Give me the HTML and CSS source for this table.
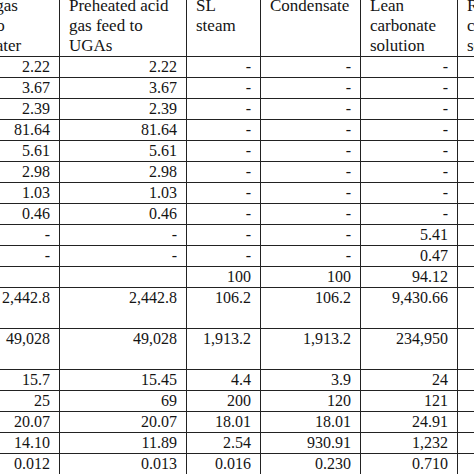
FILE: index.html
```html
<!DOCTYPE html>
<html>
<head>
<meta charset="utf-8">
<link rel="stylesheet" href="styles.css">
</head>
<body>
<table class="stream-table">
  <thead>
    <tr>
      <th class="c1">Acid gas<br>feed to<br>preheater</th>
      <th class="c2">Preheated acid<br>gas feed to<br>UGAs</th>
      <th class="c3">SL<br>steam</th>
      <th class="c4">Condensate</th>
      <th class="c5">Lean<br>carbonate<br>solution</th>
      <th class="c6">Rich<br>carbonate<br>solution</th>
    </tr>
  </thead>
  <tbody>
    <tr><td>2.22</td><td>2.22</td><td>-</td><td>-</td><td>-</td><td></td></tr>
    <tr><td>3.67</td><td>3.67</td><td>-</td><td>-</td><td>-</td><td></td></tr>
    <tr><td>2.39</td><td>2.39</td><td>-</td><td>-</td><td>-</td><td></td></tr>
    <tr><td>81.64</td><td>81.64</td><td>-</td><td>-</td><td>-</td><td></td></tr>
    <tr><td>5.61</td><td>5.61</td><td>-</td><td>-</td><td>-</td><td></td></tr>
    <tr><td>2.98</td><td>2.98</td><td>-</td><td>-</td><td>-</td><td></td></tr>
    <tr><td>1.03</td><td>1.03</td><td>-</td><td>-</td><td>-</td><td></td></tr>
    <tr><td>0.46</td><td>0.46</td><td>-</td><td>-</td><td>-</td><td></td></tr>
    <tr><td>-</td><td>-</td><td>-</td><td>-</td><td>5.41</td><td></td></tr>
    <tr><td>-</td><td>-</td><td>-</td><td>-</td><td>0.47</td><td></td></tr>
    <tr><td></td><td></td><td>100</td><td>100</td><td>94.12</td><td></td></tr>
    <tr class="tall"><td>2,442.8</td><td>2,442.8</td><td>106.2</td><td>106.2</td><td>9,430.66</td><td></td></tr>
    <tr class="tall"><td>49,028</td><td>49,028</td><td>1,913.2</td><td>1,913.2</td><td>234,950</td><td></td></tr>
    <tr><td>15.7</td><td>15.45</td><td>4.4</td><td>3.9</td><td>24</td><td></td></tr>
    <tr><td>25</td><td>69</td><td>200</td><td>120</td><td>121</td><td></td></tr>
    <tr><td>20.07</td><td>20.07</td><td>18.01</td><td>18.01</td><td>24.91</td><td></td></tr>
    <tr><td>14.10</td><td>11.89</td><td>2.54</td><td>930.91</td><td>1,232</td><td></td></tr>
    <tr><td>0.012</td><td>0.013</td><td>0.016</td><td>0.230</td><td>0.710</td><td></td></tr>
  </tbody>
</table>
</body>
</html>
```
FILE: styles.css
```css
html, body {
  margin: 0;
  padding: 0;
  background: #ffffff;
  overflow: hidden;
  width: 474px;
  height: 474px;
}

.stream-table {
  font-family: "Liberation Serif", "Times New Roman", serif;
  font-size: 16px;
  line-height: 20px;
  color: #141414;
  border-collapse: separate;
  border-spacing: 0;
  table-layout: fixed;
  width: 620px;
  margin-left: -52px;
  margin-top: -8px;
  border-left: 1px solid #222222;
  border-top: 1px solid #222222;
}

.stream-table th,
.stream-table td {
  box-sizing: border-box;
  border-right: 1px solid #222222;
  border-bottom: 1px solid #222222;
  padding: 0 9px;
  vertical-align: top;
}

.stream-table th {
  font-weight: normal;
  font-size: 17px;
  text-align: left;
  white-space: nowrap;
  padding-top: 3px;
  padding-bottom: 0;
  height: 64px;
}

.stream-table td {
  text-align: right;
  height: 21px;
}

.stream-table .tall td {
  height: 41px;
}

.c1 { width: 111px; }
.c2 { width: 127px; }
.c3 { width: 74px; }
.c4 { width: 100px; }
.c5 { width: 97px; }
.c6 { width: 111px; }
```
